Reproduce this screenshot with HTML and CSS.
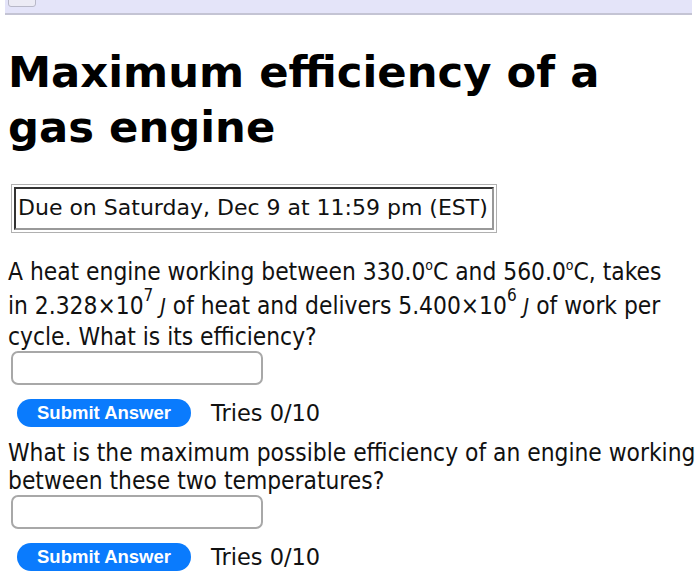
FILE: index.html
```html
<!DOCTYPE html>
<html>
<head>
<meta charset="utf-8">
<link rel="stylesheet" href="styles.css">
</head>
<body>
<div class="topbar"><span class="topicon"></span></div>
<h1 class="title">Maximum efficiency of a gas engine</h1>
<div class="due-outer"><div class="due">Due on Saturday, Dec 9 at 11:59 pm (EST)</div></div>
<p class="question q1">A heat engine working between 330.0<sup class="deg">o</sup>C and 560.0<sup class="deg">o</sup>C, takes in 2.328&times;10<sup>7</sup> <i>J</i> of heat and delivers 5.400&times;10<sup>6</sup> <i>J</i> of work per cycle. What is its efficiency?</p>
<div class="answer a1"><input class="field" type="text"></div>
<div class="submit-row"><button class="submit">Submit Answer</button><span class="tries">Tries 0/10</span></div>
<p class="question q2">What is the maximum possible efficiency of an engine working between these two temperatures?</p>
<div class="answer"><input class="field" type="text"></div>
<div class="submit-row"><button class="submit">Submit Answer</button><span class="tries">Tries 0/10</span></div>
</body>
</html>
```
FILE: styles.css
```css
html, body { margin: 0; padding: 0; background: #fff; }
body { width: 700px; overflow: hidden; font-family: "DejaVu Sans", Verdana, sans-serif; color: #111; }
.topbar { margin: 0 8px 0 5px; height: 13px; background: #e4e4f9; border-bottom: 2px solid #c4c4d4; position: relative; }
.topicon { position: absolute; left: 3px; top: -4px; width: 26px; height: 9px; border: 1px solid #b8b8c8; border-radius: 3px; background: #ecebf5; }
.title { margin: 30px 0 0 8px; font-family: "DejaVu Sans", Tahoma, sans-serif; font-weight: bold; font-size: 43.3px; line-height: 55px; width: 610px; color: #000; }
.due-outer { display: inline-block; margin: 29px 0 0 11px; border: 1px solid #b0b0b0; padding: 2px; }
.due { border: 2px solid #333; border-right-color: #999; border-bottom-color: #999; padding: 5px 4px 6px 2px; font-size: 22px; line-height: 28px; }
.question { margin: 24px 0 0 8px; font-size: 24.3px; line-height: 30px; font-stretch: condensed; }
.q1 { width: 675px; }
.question sup { font-size: 17px; line-height: 16px; vertical-align: 13px; }
.question sup.deg { font-size: 14px; vertical-align: 10px; }
.question i { font-size: 21px; }
.q2 { margin-top: 12px; line-height: 28px; width: 692px; }
.answer { margin: 0 0 0 11px; }
.a1 { margin-top: -1px; }
.field { display: block; width: 252px; height: 34px; box-sizing: border-box; border: 2px solid #a8a8a8; border-radius: 7px; padding: 0; background: #fff; }
.submit-row { display: flex; align-items: center; margin: 14px 0 0 17px; height: 28px; }
.submit { height: 28px; width: 174px; background: #0a7bfd; color: #fff; border: none; border-radius: 14px; font-family: "Liberation Sans", Arial, sans-serif; font-weight: bold; font-size: 18.5px; padding: 0; }
.tries { margin-left: 20px; font-size: 22.5px; }
```
